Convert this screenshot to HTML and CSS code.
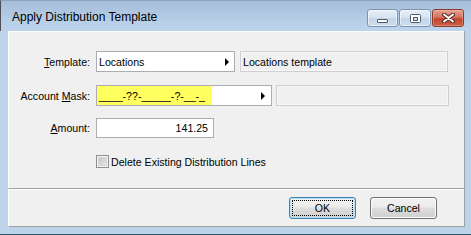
FILE: index.html
```html
<!DOCTYPE html>
<html>
<head>
<meta charset="utf-8">
<link rel="stylesheet" href="styles.css">
</head>
<body>
<div class="window">
  <div class="titlebar">
    <span class="title">Apply Distribution Template</span>
    <div class="caption">
      <div class="cbtn min"><span class="glyph-min"></span></div>
      <div class="cbtn max">
        <svg width="11" height="9" viewBox="0 0 11 9"><rect x="0.5" y="0.5" width="10" height="8" rx="1" fill="#fff" stroke="#4d5966"/><rect x="3.5" y="3.5" width="4" height="3" fill="#d3e0ef" stroke="#4d5966"/></svg>
      </div>
      <div class="cbtn close">
        <svg width="13" height="10" viewBox="0 0 13 10"><path d="M2 1.5 L11 8.5 M11 1.5 L2 8.5" stroke="#5b2a22" stroke-width="4" stroke-linecap="round"/><path d="M2 1.5 L11 8.5 M11 1.5 L2 8.5" stroke="#fff" stroke-width="2" stroke-linecap="round"/></svg>
      </div>
    </div>
  </div>
  <div class="client">
    <div class="main">
      <div class="row r1">
        <span class="label"><u>T</u>emplate:</span>
        <div class="field combo w-tpl"><span class="val">Locations</span><span class="arrow"></span></div>
        <div class="field ro ro1"><span class="val">Locations template</span></div>
      </div>
      <div class="row r2">
        <span class="label">Account <u>M</u>ask:</span>
        <div class="field combo w-mask"><span class="mask">____-??-_____-?-__-_</span><span class="arrow"></span></div>
        <div class="field ro ro2"></div>
      </div>
      <div class="row r3">
        <span class="label"><u>A</u>mount:</span>
        <div class="field amount">141.25</div>
      </div>
      <div class="row r4">
        <span class="cb"></span>
        <span class="cb-text">Delete Existing Distribution Lines</span>
      </div>
    </div>
    <div class="footer">
      <button class="btn ok"><span class="focus">OK</span></button>
      <button class="btn">Cancel</button>
    </div>
  </div>
</div>
</body>
</html>
```
FILE: styles.css
```css
* { box-sizing: border-box; }

body {
  margin: 0;
  width: 471px;
  height: 235px;
  overflow: hidden;
  font-family: "Liberation Sans", Arial, sans-serif;
  font-size: 10.6px;
  color: #000;
}

.window {
  width: 471px;
  height: 235px;
  background: #bcd3ea;
  display: flex;
  flex-direction: column;
  border-bottom: 1px solid #2b5868;
}

.titlebar {
  height: 31px;
  flex: none;
  display: flex;
  align-items: flex-start;
  background: linear-gradient(#a5bdda, #b8cfe8 70%, #bdd4eb);
  border-top: 1px solid #8ea4bd;
  border-left: 1px solid #4b4f55;
}

.title {
  font-size: 12px;
  line-height: 15px;
  margin: 9px 0 0 11px;
  white-space: nowrap;
}

.caption {
  margin: 8px 7px 0 auto;
  display: flex;
  gap: 1px;
}

.cbtn {
  height: 18px;
  width: 32px;
  border: 1px solid #7d93ad;
  border-radius: 3px;
  background: linear-gradient(#e6eef8, #d5e2f1 50%, #c4d5ea 50%, #cbdcee);
  box-shadow: inset 0 0 0 1px rgba(255,255,255,0.55);
  display: flex;
  align-items: center;
  justify-content: center;
}

.cbtn svg { display: block; }

.cbtn.min {
  width: 31px;
  align-items: flex-end;
  padding-bottom: 3px;
}

.glyph-min {
  width: 11px;
  height: 4px;
  border: 1px solid #4d5966;
  border-radius: 1px;
  background: #fff;
}

.cbtn.close {
  background: linear-gradient(#e4a394, #d5735f 45%, #c3442e 55%, #cb6047);
  border-color: #8a3a2d;
  box-shadow: inset 0 0 0 1px rgba(255,200,190,0.35);
}

.client {
  flex: none;
  height: 196px;
  margin: 0 6px 0 8px;
  background: #f0f0f0;
  display: flex;
  flex-direction: column;
  border-right: 1px solid #a0a0a0;
}

.main {
  height: 158px;
  flex: none;
  border-top: 1px solid #fbfbfb;
  border-left: 1px solid #fbfbfb;
  border-bottom: 1px solid #a0a0a0;
  padding-top: 19px;
}

.row {
  display: flex;
  align-items: center;
}

.r1 { height: 21px; }
.r2 { height: 21px; margin-top: 13px; }
.r3 { height: 20px; margin-top: 12px; }
.r4 { height: 13px; margin-top: 17px; }

.label {
  width: 81px;
  margin-right: 6px;
  text-align: right;
  white-space: nowrap;
}

.field {
  height: 100%;
  border: 1px solid #abadb3;
  background: #fff;
  display: flex;
  align-items: center;
  white-space: nowrap;
}

.combo {
  justify-content: space-between;
  padding: 0 5px 0 2px;
}

.w-tpl { width: 139px; }

.w-mask {
  width: 176px;
  padding: 0 6px 0 0;
}

.mask {
  width: 115px;
  height: 100%;
  background: #ffff60;
  padding-left: 2px;
  display: flex;
  align-items: center;
}

.arrow {
  width: 0;
  height: 0;
  border-left: 4px solid #000;
  border-top: 4px solid transparent;
  border-bottom: 4px solid transparent;
}

.ro {
  background: #f0f0f0;
  border-color: #cfcfcf;
  box-shadow: inset 0 0 0 1px #f7f7f7;
  padding-left: 2px;
}

.ro1 { width: 208px; margin-left: 5px; }
.ro2 { width: 173px; margin-left: 4px; }

.amount {
  width: 118px;
  justify-content: flex-end;
  padding-right: 5px;
}

.cb {
  width: 13px;
  height: 13px;
  margin-left: 87px;
  border: 1px solid #8f8f8f;
  background: linear-gradient(135deg, #b9bcc2, #eeeeef);
  box-shadow: inset 0 0 0 1px #f4f4f4, inset 0 0 0 2px #d6d6d6;
}

.cb-text {
  margin-left: 2px;
  white-space: nowrap;
}

.footer {
  height: 38px;
  flex: none;
  border-top: 1px solid #fff;
  border-left: 1px solid #fff;
  border-bottom: 1px solid #a0a0a0;
  display: flex;
  justify-content: flex-end;
  align-items: flex-start;
  padding: 7px 27px 0 0;
  gap: 14px;
}

.btn {
  width: 67px;
  height: 22px;
  margin: 0;
  padding: 0;
  border: 1px solid #707070;
  border-radius: 3px;
  background: linear-gradient(#f2f2f2, #ebebeb 45%, #dddddd 50%, #cfcfcf);
  box-shadow: inset 0 0 0 1px #fcfcfc;
  font-family: "Liberation Sans", Arial, sans-serif;
  font-size: 10.6px;
  color: #000;
  display: flex;
  align-items: center;
  justify-content: center;
}

.btn.ok {
  border-color: #3c7fb1;
  box-shadow: inset 0 0 0 1px #b7e3f8;
  padding: 2px;
}

.focus {
  flex: 1;
  align-self: stretch;
  border: 1px dotted #000;
  display: flex;
  align-items: center;
  justify-content: center;
}
```
